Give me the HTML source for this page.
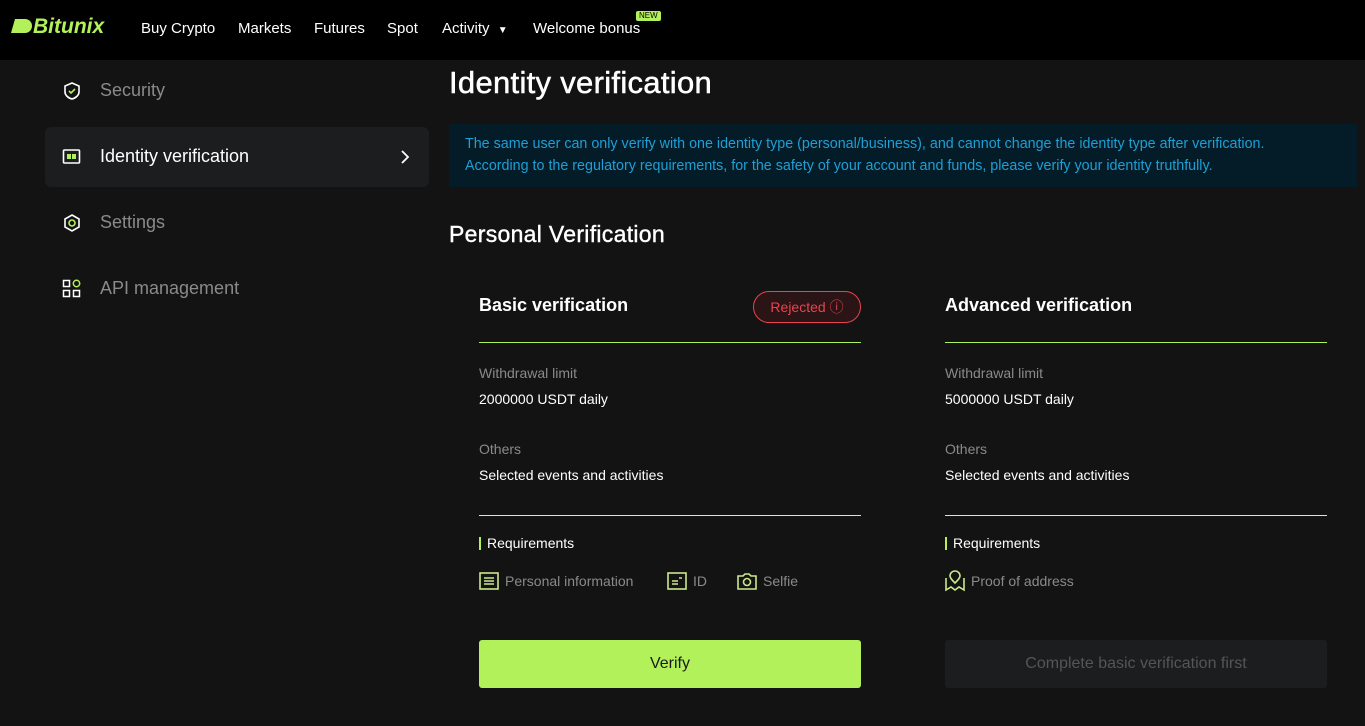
<!DOCTYPE html>
<html><head><meta charset="utf-8"><style>
*{margin:0;padding:0;box-sizing:border-box}
body{width:1365px;height:726px;background:#131313;font-family:"Liberation Sans",sans-serif;color:#fff;position:relative;overflow:hidden}
.hdr{position:absolute;left:0;top:0;width:1365px;height:60px;background:#000}
.abs{position:absolute;white-space:nowrap}
.nav{font-size:15px;color:#fff;top:20px}
.side{font-size:18px;color:#8a8a8a;left:100px}
.lbl{font-size:14px;color:#8a8a8a}
.val{font-size:14px;color:#fff}
.req{font-size:14px;color:#8a8a8a}
</style></head><body>
<div class="hdr">
  <svg class="abs" style="left:11px;top:18px" width="22" height="18" viewBox="0 0 22 18"><path d="M4 1h10a7 7 0 0 1 0 14H0z" fill="#b3f15a"/></svg>
  <div class="abs" style="left:33px;top:15px;font-size:21px;font-weight:bold;font-style:italic;color:#b3f15a">Bitunix</div>
  <div class="abs nav" style="left:141px">Buy Crypto</div>
  <div class="abs nav" style="left:238px">Markets</div>
  <div class="abs nav" style="left:314px">Futures</div>
  <div class="abs nav" style="left:387px">Spot</div>
  <div class="abs nav" style="left:442px">Activity <span style="font-size:10px;margin-left:4px">▼</span></div>
  <div class="abs nav" style="left:533px">Welcome bonus</div>
  <div class="abs" style="left:636px;top:11px;background:#b3f15a;color:#000;font-size:8px;padding:0 3px;line-height:10px;border-radius:2px">NEW</div>
</div>

<svg class="abs" style="left:62px;top:81px" width="20" height="20" viewBox="0 0 20 20"><path d="M10 2l7 3v6c0 3-3 6-7 7-4-1-7-4-7-7V5z" fill="none" stroke="#fff" stroke-width="1.6"/><path d="M7 10l2 2 4-4" fill="none" stroke="#b3f15a" stroke-width="1.6"/></svg>
<div class="abs side" style="top:80px">Security</div>
<div class="abs" style="left:45px;top:127px;width:384px;height:60px;background:#1c1d1f;border-radius:6px"></div>
<svg class="abs" style="left:62px;top:148px" width="20" height="18" viewBox="0 0 20 18"><rect x="1.5" y="2" width="16" height="13" rx="1" fill="none" stroke="#fff" stroke-width="1.6"/><rect x="5" y="6" width="4" height="5" fill="#b3f15a"/><rect x="10" y="6" width="4" height="5" fill="#b3f15a"/></svg>
<div class="abs" style="left:100px;top:146px;font-size:18px;color:#fff">Identity verification</div>
<svg class="abs" style="left:399px;top:149px" width="12" height="16" viewBox="0 0 12 16"><path d="M3 2l6 6-6 6" fill="none" stroke="#fff" stroke-width="1.8"/></svg>
<svg class="abs" style="left:62px;top:213px" width="20" height="20" viewBox="0 0 20 20"><path d="M10 2l7 4v8l-7 4-7-4V6z" fill="none" stroke="#fff" stroke-width="1.6"/><circle cx="10" cy="10" r="3" fill="none" stroke="#b3f15a" stroke-width="1.6"/></svg>
<div class="abs side" style="top:212px">Settings</div>
<svg class="abs" style="left:62px;top:279px" width="20" height="20" viewBox="0 0 20 20"><rect x="1.5" y="1.5" width="6" height="6" fill="none" stroke="#fff" stroke-width="1.5"/><circle cx="14.5" cy="4.5" r="3.2" fill="none" stroke="#b3f15a" stroke-width="1.5"/><rect x="1.5" y="11.5" width="6" height="6" fill="none" stroke="#fff" stroke-width="1.5"/><rect x="11.5" y="11.5" width="6" height="6" fill="none" stroke="#fff" stroke-width="1.5"/></svg>
<div class="abs side" style="top:278px">API management</div>

<div class="abs" style="left:449px;top:65px;font-size:31px;color:#fff;letter-spacing:0.3px;-webkit-text-stroke:0.5px #fff">Identity verification</div>
<div class="abs" style="left:449px;top:124px;width:908px;height:63px;background:#031c28"></div>
<div class="abs" style="left:465px;top:133px;font-size:14.3px;color:#1e9fd6;line-height:22px">The same user can only verify with one identity type (personal/business), and cannot change the identity type after verification.<br>According to the regulatory requirements, for the safety of your account and funds, please verify your identity truthfully.</div>
<div class="abs" style="left:449px;top:221px;font-size:23px;color:#fff;letter-spacing:0.3px;-webkit-text-stroke:0.4px #fff">Personal Verification</div>

<div class="abs" style="left:479px;top:295px;font-size:18px;font-weight:bold">Basic verification</div>
<div class="abs" style="left:753px;top:291px;width:108px;height:32px;border:1px solid #e8434f;border-radius:16px;background:#2a1416;color:#e8434f;font-size:14px;line-height:30px;text-align:center">Rejected ⓘ</div>
<div class="abs" style="left:479px;top:342px;width:382px;height:1px;background:#b3f15a"></div>
<div class="abs lbl" style="left:479px;top:365px">Withdrawal limit</div>
<div class="abs val" style="left:479px;top:391px">2000000 USDT daily</div>
<div class="abs lbl" style="left:479px;top:441px">Others</div>
<div class="abs val" style="left:479px;top:467px">Selected events and activities</div>
<div class="abs" style="left:479px;top:515px;width:382px;height:1px;background:#d6ecc0"></div>
<div class="abs" style="left:479px;top:537px;width:2px;height:13px;background:#b3f15a"></div>
<div class="abs val" style="left:487px;top:535px">Requirements</div>
<svg class="abs" style="left:479px;top:571px" width="20" height="20" viewBox="0 0 20 20"><rect x="1" y="2" width="18" height="16" fill="none" stroke="#cbe98a" stroke-width="1.6"/><path d="M5 7h10M5 10h10M5 13h10" stroke="#cbe98a" stroke-width="1.6"/></svg>
<div class="abs req" style="left:505px;top:573px">Personal information</div>
<svg class="abs" style="left:667px;top:571px" width="20" height="20" viewBox="0 0 20 20"><rect x="1" y="2" width="18" height="16" fill="none" stroke="#cbe98a" stroke-width="1.6"/><path d="M5 13h6M5 10h6M12 7h3" stroke="#cbe98a" stroke-width="1.6"/></svg>
<div class="abs req" style="left:693px;top:573px">ID</div>
<svg class="abs" style="left:737px;top:571px" width="20" height="20" viewBox="0 0 20 20"><path d="M1 5h5l2-2h4l2 2h5v13H1z" fill="none" stroke="#cbe98a" stroke-width="1.6"/><circle cx="10" cy="11" r="3.5" fill="none" stroke="#cbe98a" stroke-width="1.6"/></svg>
<div class="abs req" style="left:763px;top:573px">Selfie</div>
<div class="abs" style="left:479px;top:640px;width:382px;height:48px;background:#b3f15a;border-radius:3px;color:#1a1a1a;font-size:16px;text-align:center;line-height:48px">Verify</div>

<div class="abs" style="left:945px;top:295px;font-size:18px;font-weight:bold">Advanced verification</div>
<div class="abs" style="left:945px;top:342px;width:382px;height:1px;background:#b3f15a"></div>
<div class="abs lbl" style="left:945px;top:365px">Withdrawal limit</div>
<div class="abs val" style="left:945px;top:391px">5000000 USDT daily</div>
<div class="abs lbl" style="left:945px;top:441px">Others</div>
<div class="abs val" style="left:945px;top:467px">Selected events and activities</div>
<div class="abs" style="left:945px;top:515px;width:382px;height:1px;background:#d6ecc0"></div>
<div class="abs" style="left:945px;top:537px;width:2px;height:13px;background:#b3f15a"></div>
<div class="abs val" style="left:953px;top:535px">Requirements</div>
<svg class="abs" style="left:945px;top:570px" width="20" height="22" viewBox="0 0 20 22"><path d="M10 13c-3-3-5-5-5-7a5 5 0 0 1 10 0c0 2-2 4-5 7z" fill="none" stroke="#cbe98a" stroke-width="1.6"/><path d="M1 8v12l5-3 4 3 4-3 5 3V8" fill="none" stroke="#cbe98a" stroke-width="1.6"/></svg>
<div class="abs req" style="left:971px;top:573px">Proof of address</div>
<div class="abs" style="left:945px;top:640px;width:382px;height:48px;background:#1c1d1f;border-radius:3px;color:#555;font-size:16px;text-align:center;line-height:48px">Complete basic verification first</div>
</body></html>
